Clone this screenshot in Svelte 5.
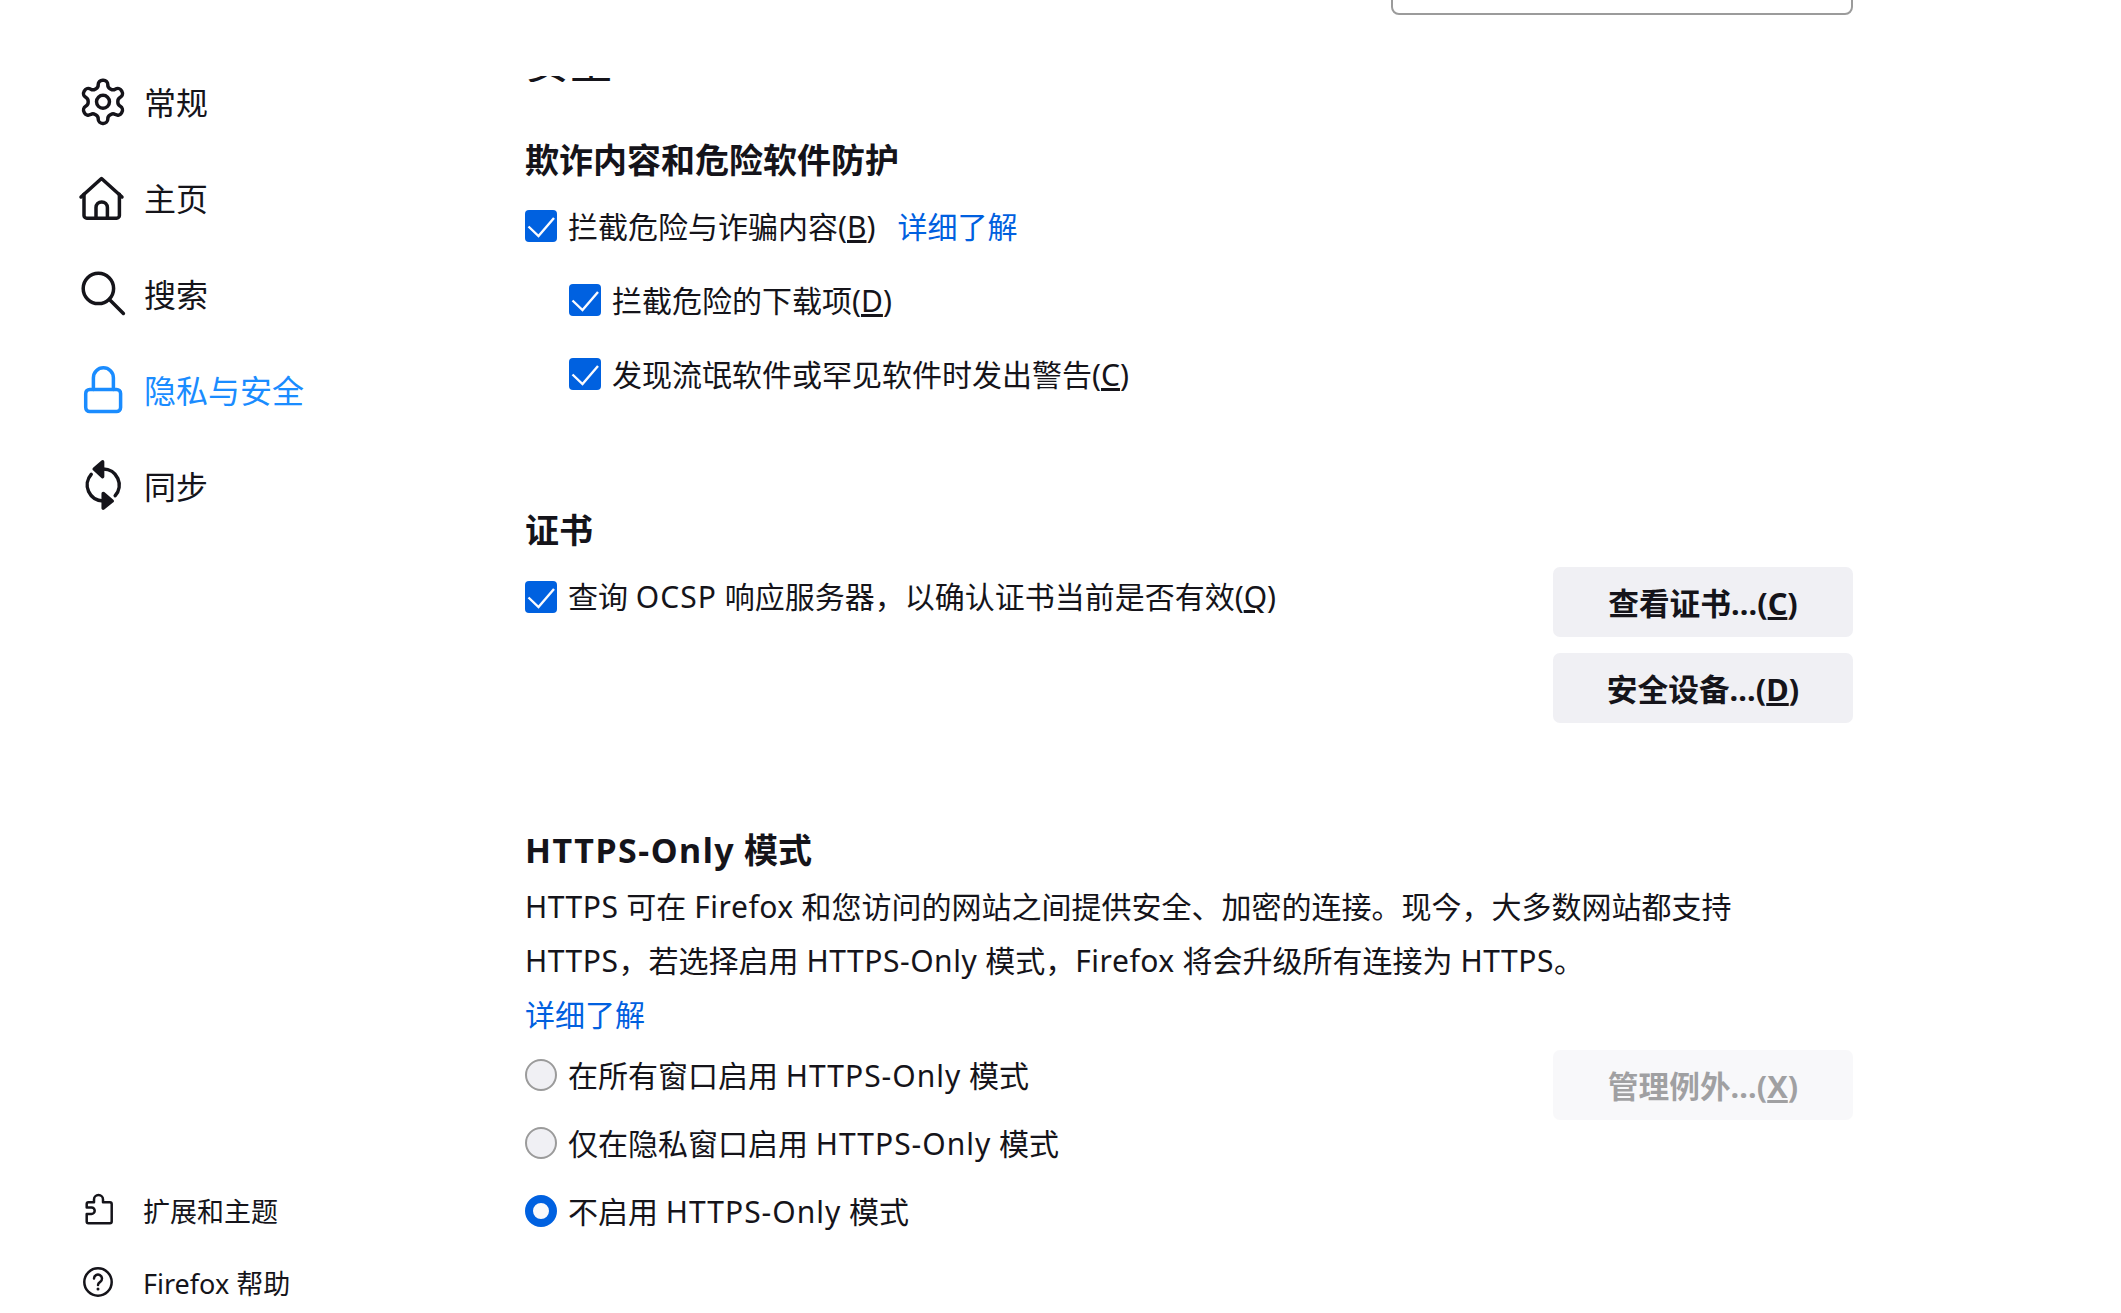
<script>
	const navItems = [
		{ id: 'general', label: '常规' },
		{ id: 'home', label: '主页' },
		{ id: 'search', label: '搜索' },
		{ id: 'privacy', label: '隐私与安全', active: true },
		{ id: 'sync', label: '同步' }
	];
	const radios = [
		{ before: '在所有窗口启用', checked: false },
		{ before: '仅在隐私窗口启用', checked: false },
		{ before: '不启用', checked: true }
	];
</script>

{#snippet check()}
	<svg class="checkbox" viewBox="0 0 32 32" aria-hidden="true">
		<rect width="32" height="32" rx="4" fill="#0061e0" />
		<path d="M3.5 16.5 13.5 26 29 8" fill="none" stroke="#fbfbfe" stroke-width="2.4" />
	</svg>
{/snippet}

<div class="page">
	<nav class="sidebar">
		<ul class="cats">
			{#each navItems as item}
				<li class="cat" class:active={item.active}>
					<svg class="cat-icon" viewBox="0 0 24 24" fill="none" stroke="currentColor" stroke-width="1.75" stroke-linecap="round" stroke-linejoin="round" aria-hidden="true">
						{#if item.id === 'general'}
							<g transform="translate(12 11.4) scale(1.08) translate(-12 -12)" stroke-width="1.6">
								<path d="M12.22 2h-.44a2 2 0 0 0-2 2v.18a2 2 0 0 1-1 1.73l-.43.25a2 2 0 0 1-2 0l-.15-.08a2 2 0 0 0-2.73.73l-.22.38a2 2 0 0 0 .73 2.73l.15.1a2 2 0 0 1 1 1.72v.51a2 2 0 0 1-1 1.74l-.15.09a2 2 0 0 0-.73 2.73l.22.38a2 2 0 0 0 2.73.73l.15-.08a2 2 0 0 1 2 0l.43.25a2 2 0 0 1 1 1.73V20a2 2 0 0 0 2 2h.44a2 2 0 0 0 2-2v-.18a2 2 0 0 1 1-1.73l.43-.25a2 2 0 0 1 2 0l.15.08a2 2 0 0 0 2.73-.73l.22-.39a2 2 0 0 0-.73-2.73l-.15-.08a2 2 0 0 1-1-1.74v-.5a2 2 0 0 1 1-1.74l.15-.09a2 2 0 0 0 .73-2.73l-.22-.38a2 2 0 0 0-2.73-.73l-.15.08a2 2 0 0 1-2 0l-.43-.25a2 2 0 0 1-1-1.73V4a2 2 0 0 0-2-2z" />
								<circle cx="12" cy="12" r="3" />
							</g>
						{:else if item.id === 'home'}
							<path d="M1 11 11.25 1.75 21.5 11" />
							<path d="M2.5 9.6v10.6a1.4 1.4 0 0 0 1.4 1.4h14.9a1.4 1.4 0 0 0 1.4-1.4V9.6" />
							<path d="M8.5 21.6v-5.3a2.85 2.85 0 0 1 5.7 0v5.3" />
						{:else if item.id === 'search'}
							<circle cx="9.7" cy="8.7" r="7.6" />
							<path d="m15.2 14.2 7 7" />
						{:else if item.id === 'privacy'}
							<path d="M7.2 11.2V5.4a5 5 0 0 1 10 0v5.8" />
							<rect x="3.35" y="11.2" width="17.45" height="11.1" rx="2" />
						{:else}
							<path d="M12.1 3a8 8 0 0 1 6 13.3" />
							<path d="M12.1 19a8 8 0 0 1-6-13.3" />
							<path d="M11.8-.6 7.6 3l4.2 3.8z" fill="currentColor" />
							<path d="M12.1 15.2 16.6 19l-4.5 3.6z" fill="currentColor" />
						{/if}
					</svg>
					<span class="cat-label">{item.label}</span>
				</li>
			{/each}
		</ul>

		<ul class="footer-links">
			<li class="foot">
				<svg class="foot-icon" viewBox="0 0 32 32" fill="none" stroke="currentColor" stroke-width="2.5" stroke-linejoin="round" aria-hidden="true">
					<path d="M11 8.3H5.4a1.7 1.7 0 0 0-1.7 1.7v3.5h4.8a3.2 3.2 0 0 1 0 6.4H3.7v7.6a1.7 1.7 0 0 0 1.7 1.7H27a1.7 1.7 0 0 0 1.7-1.7V10A1.7 1.7 0 0 0 27 8.3h-7V5.500a4.500 4.500 0 0 0-9 0z" />
				</svg>
				<span>扩展和主题</span>
			</li>
			<li class="foot">
				<svg class="foot-icon" viewBox="0 0 32 32" fill="none" stroke="currentColor" stroke-width="2.5" stroke-linecap="round" aria-hidden="true">
					<circle cx="15" cy="16" r="13.7" />
					<path d="M11 12.500a4 4 0 1 1 6.200 3.400c-1.400.9-2.200 1.700-2.200 3.100" />
					<circle cx="15" cy="23" r="1.500" fill="currentColor" stroke="none" />
				</svg>
				<span>Firefox 帮助</span>
			</li>
		</ul>
	</nav>

	<main class="content">
		<div class="top-bar">
			<div class="search-box"></div>
		</div>

		<div class="clipped-title">
			<h1>安全</h1>
		</div>

		<section class="phishing">
			<h2>欺诈内容和危险软件防护</h2>
			<div class="options">
				<div class="option">
					{@render check()}
					<span class="label">拦截危险与诈骗内容(<u>B</u>)</span>
					<a class="link inline" href="#phishing">详细了解</a>
				</div>
				<div class="option nested">
					{@render check()}
					<span class="label">拦截危险的下载项(<u>D</u>)</span>
				</div>
				<div class="option nested">
					{@render check()}
					<span class="label">发现流氓软件或罕见软件时发出警告(<u>C</u>)</span>
				</div>
			</div>
		</section>

		<section class="certs">
			<h2>证书</h2>
			<div class="split">
				<div class="option ocsp">
					{@render check()}
					<span class="label">查询 <span class="en wide">OCSP</span> 响应服务器，以确认证书当前是否有效(<u>Q</u>)</span>
				</div>
				<div class="buttons">
					<button>查看证书…(<u>C</u>)</button>
					<button>安全设备…(<u>D</u>)</button>
				</div>
			</div>
		</section>

		<section class="https">
			<h2><span class="en head">HTTPS-Only</span> 模式</h2>
			<p class="desc"><span class="en">HTTPS</span> 可在 <span class="en">Firefox</span> 和您访问的网站之间提供安全、加密的连接。现今，大多数网站都支持 <span class="en">HTTPS</span>，若选择启用 <span class="en">HTTPS-Only</span> 模式，<span class="en">Firefox</span> 将会升级所有连接为 <span class="en">HTTPS</span>。<br /><a class="link" href="#https">详细了解</a></p>
			<div class="split https-split">
				<div class="radios">
					{#each radios as radio}
						<div class="option">
							<span class="radio" class:checked={radio.checked}></span>
							<span class="label">{radio.before} <span class="en wide">HTTPS-Only</span> 模式</span>
						</div>
					{/each}
				</div>
				<button disabled>管理例外…(<u>X</u>)</button>
			</div>
		</section>
	</main>
</div>

<style>
	:global(body) {
		background: #fff;
	}

	.page {
		display: grid;
		grid-template-columns: 525px 1328px;
		height: 1313px;
		overflow: hidden;
		color: #15141a;
		font-family: "Noto Sans", "Noto Sans CJK SC", sans-serif;
		font-size: 30px;
	}

	ul {
		list-style: none;
		margin: 0;
		padding: 0;
	}

	/* latin runs sit a bit wider than Noto Sans sets them */
	.en {
		letter-spacing: 0.55px;
	}
	.en.wide {
		letter-spacing: 1px;
	}
	.en.head {
		letter-spacing: 1.5px;
	}

	/* sidebar */
	.sidebar {
		display: flex;
		flex-direction: column;
		justify-content: space-between;
		padding: 55px 0 0 79px;
		height: 1313px;
		box-sizing: border-box;
	}
	.cat {
		display: flex;
		align-items: center;
		gap: 17px;
		height: 96px;
		font-size: 32px;
	}
	.cat-label {
		margin-top: -5px;
	}
	.cat.active {
		color: #1a8cff;
	}
	.cat-icon {
		width: 48px;
		height: 48px;
		overflow: visible;
	}
	.footer-links {
		margin-bottom: -5px;
	}
	.foot {
		display: flex;
		align-items: center;
		gap: 28px;
		height: 72px;
		padding-left: 4px;
		font-size: 27px;
	}
	.foot-icon {
		width: 32px;
		height: 32px;
		overflow: visible;
	}

	/* main column */
	.top-bar {
		display: flex;
		justify-content: flex-end;
		height: 15px;
	}
	.search-box {
		width: 462px;
		height: 60px;
		margin-top: -45px;
		box-sizing: border-box;
		border: 2px solid #9b9b9b;
		border-radius: 8px;
	}
	.clipped-title {
		display: flex;
		align-items: flex-end;
		height: 6px;
		margin-top: 61px;
		overflow: hidden;
	}
	h1 {
		flex: none;
		margin: 0 0 -2px;
		font-size: 44px;
		font-weight: 400;
		line-height: 1;
	}
	h2 {
		margin: 0;
		font-size: 34px;
		font-weight: 700;
		line-height: 44px;
	}
	.phishing {
		margin-top: 56px;
	}
	.options {
		display: flex;
		flex-direction: column;
		gap: 30px;
		margin-top: 22px;
	}
	.option {
		display: flex;
		align-items: center;
		gap: 11px;
		min-height: 44px;
	}
	.option .checkbox,
	.option .radio {
		margin-right: 1px;
	}
	.label {
		margin: -2px 0 0 -1px;
	}
	.option.nested {
		padding-left: 44px;
	}
	.checkbox {
		flex: none;
		width: 32px;
		height: 32px;
	}
	.link {
		color: #0060df;
		text-decoration: none;
	}
	.link.inline {
		margin: -2px 0 0 11px;
	}
	.certs {
		margin-top: 112px;
	}
	.split {
		display: flex;
		justify-content: space-between;
		align-items: flex-start;
		margin-top: 15px;
	}
	.ocsp {
		min-height: 60px;
	}
	.ocsp .label {
		margin-top: -4px;
	}
	.buttons {
		display: flex;
		flex-direction: column;
		gap: 16px;
	}
	button {
		width: 300px;
		height: 70px;
		padding: 0 0 2px;
		border: none;
		border-radius: 7px;
		background: #f0f0f4;
		color: #15141a;
		font: inherit;
		font-size: 30.7px;
		font-weight: 700;
	}
	button:disabled {
		opacity: 0.4;
	}
	.https {
		margin-top: 105px;
	}
	.desc {
		max-width: 1240px;
		margin: 8px 0 0;
		line-height: 54px;
	}
	.https-split {
		margin-top: 8px;
	}
	.radios {
		display: flex;
		flex-direction: column;
		gap: 24px;
		padding-top: 3px;
	}
	.radio {
		flex: none;
		width: 32px;
		height: 32px;
		box-sizing: border-box;
		border: 2px solid #9b9b9b;
		border-radius: 50%;
		background: #f0f0f4;
	}
	.radio.checked {
		border: 8px solid #0061e0;
		background: #f9f9fb;
	}
</style>
